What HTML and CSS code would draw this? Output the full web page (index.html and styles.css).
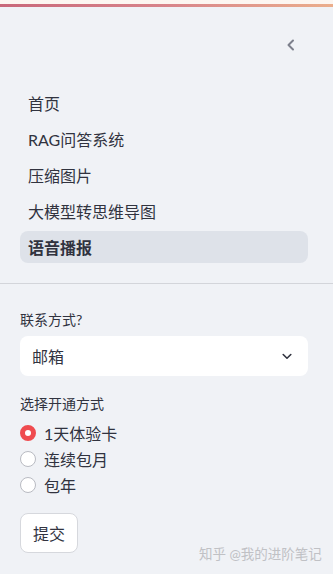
FILE: index.html
```html
<!DOCTYPE html>
<html lang="zh">
<head>
<meta charset="utf-8">
<link rel="stylesheet" href="styles.css">
</head>
<body>
<div class="topgap"></div>
<div class="stripe"></div>
<aside class="sidebar">
  <div class="collapse-row">
    <svg class="collapse" width="10" height="12" viewBox="0 0 10 12"><polyline points="7,1.5 2.5,6 7,10.5" fill="none" stroke="#7d808c" stroke-width="2" stroke-linecap="round" stroke-linejoin="round"/></svg>
  </div>
  <nav class="nav">
    <a class="nav-item">首页</a>
    <a class="nav-item">RAG问答系统</a>
    <a class="nav-item">压缩图片</a>
    <a class="nav-item">大模型转思维导图</a>
    <a class="nav-item active">语音播报</a>
  </nav>
  <hr class="divider">
  <div class="form">
    <label class="label">联系方式?</label>
    <div class="select">
      <span>邮箱</span>
      <svg width="10" height="7" viewBox="0 0 10 7"><polyline points="1.2,1.5 5,5.2 8.8,1.5" fill="none" stroke="#31333f" stroke-width="1.6" stroke-linecap="round" stroke-linejoin="round"/></svg>
    </div>
    <label class="label label2">选择开通方式</label>
    <div class="radios">
      <div class="radio-row"><span class="radio checked"></span><span>1天体验卡</span></div>
      <div class="radio-row"><span class="radio"></span><span>连续包月</span></div>
      <div class="radio-row"><span class="radio"></span><span>包年</span></div>
    </div>
    <button class="btn">提交</button>
  </div>
</aside>
<div class="watermark">知乎 @我的进阶笔记</div>
</body>
</html>
```
FILE: styles.css
```css
html, body {
  margin: 0;
  padding: 0;
}
body {
  background: #f0f2f6;
  font-family: "Lato", "Noto Sans CJK SC", sans-serif;
  color: #31333f;
  width: 333px;
  height: 574px;
  overflow: hidden;
  position: relative;
}
.topgap {
  height: 4px;
  background: #fdf6f1;
}
.stripe {
  height: 3px;
  background: linear-gradient(90deg, #c9687a 0%, #d8848a 50%, #ebae8c 100%);
}
.sidebar {
  display: flex;
  flex-direction: column;
}
.collapse-row {
  height: 75px;
  display: flex;
  align-items: center;
  justify-content: flex-end;
  padding-right: 37px;
  box-sizing: border-box;
}
.collapse {
  display: block;
}
.nav {
  display: flex;
  flex-direction: column;
  gap: 4px;
  margin: 5px 25px 0 20px;
}
.nav-item {
  height: 32px;
  display: flex;
  align-items: center;
  padding-left: 8px;
  border-radius: 8px;
  font-size: 16px;
  color: #31333f;
}
.nav-item.active {
  background: #dee2e9;
  font-weight: 700;
}
.divider {
  border: 0;
  border-top: 1px solid #d3d5da;
  margin: 20px 0 0 0;
  height: 0;
}
.form {
  display: flex;
  flex-direction: column;
  align-items: flex-start;
  padding: 26px 25px 0 20px;
}
.label {
  font-size: 14px;
  line-height: 20px;
  height: 20px;
  color: #31333f;
}
.select {
  margin-top: 6px;
  align-self: stretch;
  height: 40px;
  background: #ffffff;
  border-radius: 8px;
  display: flex;
  align-items: center;
  justify-content: space-between;
  padding: 0 16px 0 12px;
  font-size: 16px;
}
.label2 {
  margin-top: 18px;
}
.radios {
  display: flex;
  flex-direction: column;
  margin-top: 6px;
}
.radio-row {
  height: 26px;
  display: flex;
  align-items: center;
  gap: 8px;
  font-size: 16px;
}
.radio {
  width: 16px;
  height: 16px;
  box-sizing: border-box;
  border-radius: 50%;
  border: 1px solid #b9bbc2;
  background: #ffffff;
}
.radio.checked {
  border: 5px solid #ef4b4f;
  background: #ffffff;
}
.btn {
  margin-top: 15px;
  height: 40px;
  padding: 0 12px;
  background: #ffffff;
  border: 1px solid #d6d8dd;
  border-radius: 8px;
  font-family: "Lato", "Noto Sans CJK SC", sans-serif;
  font-size: 16px;
  color: #31333f;
}
.watermark {
  position: absolute;
  left: 199px;
  top: 545px;
  font-size: 13.5px;
  line-height: 18px;
  color: #c0c1c5;
  white-space: nowrap;
}
```
